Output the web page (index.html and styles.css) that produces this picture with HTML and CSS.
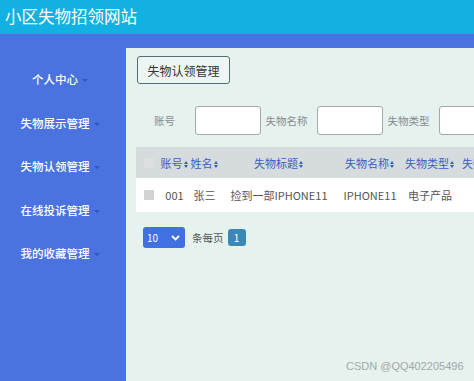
FILE: index.html
```html
<html>
<head>
<meta charset="utf-8" />
<title>小区失物招领网站</title>
<link rel="stylesheet" href="styles.css">
</head>
<body>

<div id="top">
    <span class="site-title">小区失物招领网站</span>
</div>

<div id="frame">
    <div id="side">
        <ul class="menu">
            <li>个人中心<span class="caret"></span></li>
            <li>失物展示管理<span class="caret"></span></li>
            <li>失物认领管理<span class="caret"></span></li>
            <li>在线投诉管理<span class="caret"></span></li>
            <li>我的收藏管理<span class="caret"></span></li>
        </ul>
    </div>

    <div id="main">
        <div class="panel">
            <button class="tab-btn">失物认领管理</button>

            <div class="search">
                <label>账号</label><input type="text" />
                <label>失物名称</label><input type="text" />
                <label>失物类型</label><input type="text" />
            </div>

            <div class="table-wrap">
                <table class="list">
                    <colgroup>
                        <col class="c-check" />
                        <col class="c-id" />
                        <col class="c-name" />
                        <col class="c-title" />
                        <col class="c-item" />
                        <col class="c-type" />
                        <col class="c-more" />
                    </colgroup>
                    <tr class="head">
                        <td><span class="box light"></span></td>
                        <td>账号<span class="sort"></span></td>
                        <td>姓名<span class="sort"></span></td>
                        <td>失物标题<span class="sort"></span></td>
                        <td>失物名称<span class="sort"></span></td>
                        <td>失物类型<span class="sort"></span></td>
                        <td class="more">失物图片<span class="sort"></span></td>
                    </tr>
                    <tr class="row">
                        <td><span class="box"></span></td>
                        <td>001</td>
                        <td>张三</td>
                        <td>捡到一部IPHONE11</td>
                        <td>IPHONE11</td>
                        <td>电子产品</td>
                        <td></td>
                    </tr>
                </table>
            </div>

            <div class="pager">
                <div class="size-select">
                    <span>10</span>
                    <svg width="9" height="6" viewBox="0 0 9 6"><path d="M1 1 L4.5 4.5 L8 1" fill="none" stroke="#fff" stroke-width="1.8"/></svg>
                </div>
                <span class="per-page">条每页</span>
                <span class="page-num">1</span>
            </div>
        </div>
    </div>
</div>

<div class="watermark">CSDN @QQ402205496</div>

</body>
</html>
```

FILE: styles.css
```css
body {
    margin: 0;
    width: 474px;
    height: 381px;
    overflow: hidden;
    font-family: "Noto Sans CJK SC", "Noto Sans", sans-serif;
    position: relative;
}

#top {
    height: 34px;
    background: #13b1e1;
    display: flex;
    align-items: center;
    padding-left: 5px;
}

#top .site-title {
    color: #fff;
    font-size: 16.5px;
    margin-top: -2px;
}

#frame {
    display: flex;
    height: 347px;
    background: #4a73e0;
}

#side {
    width: 126px;
    flex: none;
}

.menu {
    list-style: none;
    margin: 0;
    padding: 24px 6px 0 0;
}

.menu li {
    height: 43.5px;
    line-height: 43.5px;
    text-align: center;
    color: #fff;
    font-size: 11.5px;
    font-weight: 500;
}

.menu .caret {
    display: inline-block;
    width: 0;
    height: 0;
    margin-left: 4px;
    vertical-align: 2px;
    border-left: 3px solid transparent;
    border-right: 3px solid transparent;
    border-top: 3px solid #3356b8;
}

#main {
    flex: 1;
    padding-top: 14px;
    min-width: 0;
}

.panel {
    height: 333px;
    background: #e5f2ee;
    padding: 8px 0 0 10px;
    box-sizing: border-box;
    overflow: hidden;
}

.tab-btn {
    display: block;
    margin-left: 1px;
    width: 93px;
    height: 28px;
    background: #eef6f3;
    border: 1.5px solid #536e72;
    border-radius: 3px;
    font-family: inherit;
    font-size: 12px;
    color: #333;
    padding: 0;
}

.search {
    display: flex;
    align-items: center;
    margin: 22px 0 0 3px;
    white-space: nowrap;
}

.search label {
    width: 56px;
    flex: none;
    text-align: center;
    padding-right: 5px;
    box-sizing: border-box;
    font-size: 10.5px;
    color: #868b8d;
}

.search input {
    width: 66px;
    height: 29px;
    flex: none;
    box-sizing: border-box;
    border: 1px solid #a3a8aa;
    border-radius: 3px;
    background: #fff;
}

.table-wrap {
    margin-top: 12px;
    overflow: hidden;
}

.list {
    border-collapse: collapse;
    table-layout: fixed;
    width: 402px;
    white-space: nowrap;
    font-size: 11px;
}

.list td {
    padding: 0;
    text-align: center;
    overflow: hidden;
}

.list .head {
    height: 31px;
    background: #d6dbde;
    color: #3a5ccc;
}

.list .row {
    height: 34px;
    background: #fff;
    color: #555;
}

.c-check { width: 24px; }
.c-id { width: 29px; }
.c-name { width: 31px; }
.c-title { width: 118px; }
.c-item { width: 64px; }
.c-type { width: 56px; }
.c-more { width: 80px; }

.list td.more {
    text-align: left;
    padding-left: 4px;
}

.box {
    display: inline-block;
    width: 10px;
    height: 10px;
    background: #d3d3d3;
    vertical-align: -1px;
    margin-left: 2px;
}

.box.light {
    background: #dce0e3;
}

.sort {
    display: inline-block;
    width: 5px;
    height: 7px;
    margin-left: 1px;
    position: relative;
}

.sort::before,
.sort::after {
    content: "";
    position: absolute;
    left: 0;
    border-left: 2.5px solid transparent;
    border-right: 2.5px solid transparent;
}

.sort::before {
    top: 0;
    border-bottom: 3px solid #3a5ccc;
}

.sort::after {
    bottom: 0;
    border-top: 3px solid #3a5ccc;
}

.pager {
    display: flex;
    align-items: center;
    margin: 15px 0 0 7px;
}

.size-select {
    width: 42px;
    height: 21px;
    box-sizing: border-box;
    background: #4170e0;
    border-radius: 3px;
    color: #fff;
    font-size: 10px;
    display: flex;
    align-items: center;
    justify-content: space-between;
    padding: 0 5px 0 4px;
}

.per-page {
    margin-left: 7px;
    font-size: 10.5px;
    color: #555;
}

.page-num {
    margin-left: 4px;
    width: 18px;
    height: 17px;
    line-height: 17px;
    text-align: center;
    background: #3a88b8;
    color: #fff;
    border-radius: 3px;
    font-size: 10px;
}

.watermark {
    position: absolute;
    left: 346px;
    top: 360px;
    font-family: "Liberation Sans", Arial, sans-serif;
    font-size: 11px;
    color: #a3a8a8;
}
```
